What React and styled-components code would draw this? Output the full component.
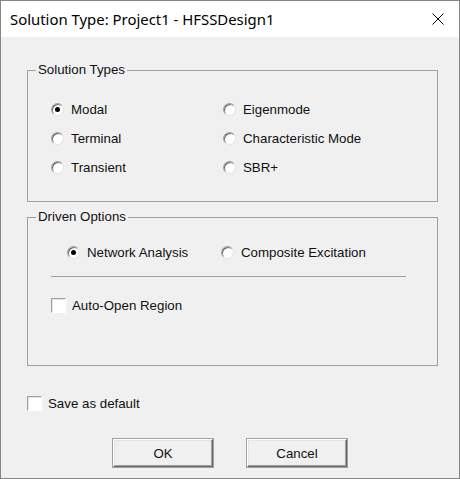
import styled, { createGlobalStyle } from "styled-components";

const GlobalStyle = createGlobalStyle`
  html, body {
    margin: 0;
    padding: 0;
    background: #f0f0f0;
  }
  * {
    box-sizing: border-box;
  }
`;

export default function App() {
  return (
    <>
      <GlobalStyle />
      <Window>
        <TitleBar>
          <span>Solution Type: Project1 - HFSSDesign1</span>
          <CloseIcon width="12" height="12" viewBox="0 0 12 12">
            <path d="M0.5 0.5 L11.5 11.5 M11.5 0.5 L0.5 11.5" stroke="#000" strokeWidth="1" />
          </CloseIcon>
        </TitleBar>
        <Body>
          <Group $height={139}>
            <Legend>Solution Types</Legend>
            <TypeGrid>
              <Radio checked label="Modal" />
              <Radio label="Eigenmode" />
              <Radio label="Terminal" />
              <Radio label="Characteristic Mode" />
              <Radio label="Transient" />
              <Radio label="SBR+" />
            </TypeGrid>
          </Group>
          <Group $height={156} $gap={8}>
            <Legend>Driven Options</Legend>
            <DrivenRow>
              <Radio checked label="Network Analysis" />
              <Radio label="Composite Excitation" />
            </DrivenRow>
            <Separator />
            <CheckRow $indent={23} $top={18}>
              <Check label="Auto-Open Region" />
            </CheckRow>
          </Group>
          <CheckRow $indent={0} $top={27}>
            <Check label="Save as default" />
          </CheckRow>
          <ButtonRow>
            <Button>OK</Button>
            <Button>Cancel</Button>
          </ButtonRow>
        </Body>
      </Window>
    </>
  );
}

const Radio = ({ checked, label }) => (
  <Item>
    <RadioDot $checked={checked} />
    <span>{label}</span>
  </Item>
);

const Check = ({ label }) => (
  <Item $gap={6}>
    <CheckBox />
    <span>{label}</span>
  </Item>
);

const Window = styled.div`
  width: 460px;
  height: 479px;
  border: 1px solid #858585;
  display: flex;
  flex-direction: column;
  background: #f0f0f0;
  font-family: "Liberation Sans", Arial, sans-serif;
  font-size: 13.3px;
  color: #111;
`;

const TitleBar = styled.div`
  height: 36px;
  flex-shrink: 0;
  background: #fff;
  display: flex;
  align-items: center;
  justify-content: space-between;
  padding: 0 15px 1px 9px;
  font-family: "Noto Sans", "Open Sans", sans-serif;
  font-size: 14.9px;
  color: #000;
`;

const CloseIcon = styled.svg`
  display: block;
`;

const Body = styled.div`
  flex: 1;
  display: flex;
  flex-direction: column;
  padding: 26px 21px 0 26px;
`;

const Group = styled.fieldset`
  margin: ${(p) => p.$gap || 0}px 0 0 0;
  padding: 0;
  height: ${(p) => p.$height}px;
  border: 1px solid #a0a0a0;
  min-inline-size: 0;
`;

const Legend = styled.legend`
  margin-left: 8px;
  padding: 0 2px;
  line-height: 14px;
`;

const TypeGrid = styled.div`
  display: grid;
  grid-template-columns: 172px auto;
  grid-auto-rows: 20px;
  row-gap: 9px;
  padding: 22px 0 0 23px;
`;

const DrivenRow = styled.div`
  display: grid;
  grid-template-columns: 154px auto;
  height: 20px;
  margin-top: 18px;
  padding-left: 39px;
`;

const Separator = styled.div`
  height: 1px;
  width: 355px;
  margin: 14px 0 0 23px;
  background: #a0a0a0;
`;

const CheckRow = styled.div`
  display: flex;
  height: 20px;
  margin-top: ${(p) => p.$top}px;
  padding-left: ${(p) => p.$indent}px;
`;

const Item = styled.label`
  display: flex;
  align-items: center;
  gap: ${(p) => p.$gap || 7}px;
  white-space: nowrap;
`;

const RadioDot = styled.span`
  position: relative;
  width: 13px;
  height: 13px;
  flex-shrink: 0;
  border-radius: 50%;
  background: #fff;
  border: 1px solid;
  border-color: #a0a0a0 #e3e3e3 #e3e3e3 #a0a0a0;
  box-shadow: inset 1px 1px 0 #696969;
  &::after {
    content: "";
    display: ${(p) => (p.$checked ? "block" : "none")};
    position: absolute;
    left: 3px;
    top: 3px;
    width: 5px;
    height: 5px;
    border-radius: 50%;
    background: #000;
  }
`;

const CheckBox = styled.span`
  width: 15px;
  height: 15px;
  flex-shrink: 0;
  background: #fff;
  border: 1px solid;
  border-color: #a0a0a0 #fff #fff #a0a0a0;
  box-shadow: inset 1px 1px 0 #e3e3e3;
`;

const ButtonRow = styled.div`
  display: flex;
  gap: 34px;
  margin-top: 26px;
  padding-left: 86px;
`;

const Button = styled.button`
  width: 100px;
  height: 28px;
  padding: 0;
  font-family: "Liberation Sans", Arial, sans-serif;
  font-size: 13.3px;
  color: #111;
  background: #f0f0f0;
  border: 1px solid;
  border-color: #fff #696969 #696969 #fff;
  box-shadow: inset -1px -1px 0 #a0a0a0, inset 1px 1px 0 #e3e3e3, 0 0 0 1px #a0a0a0;
`;
